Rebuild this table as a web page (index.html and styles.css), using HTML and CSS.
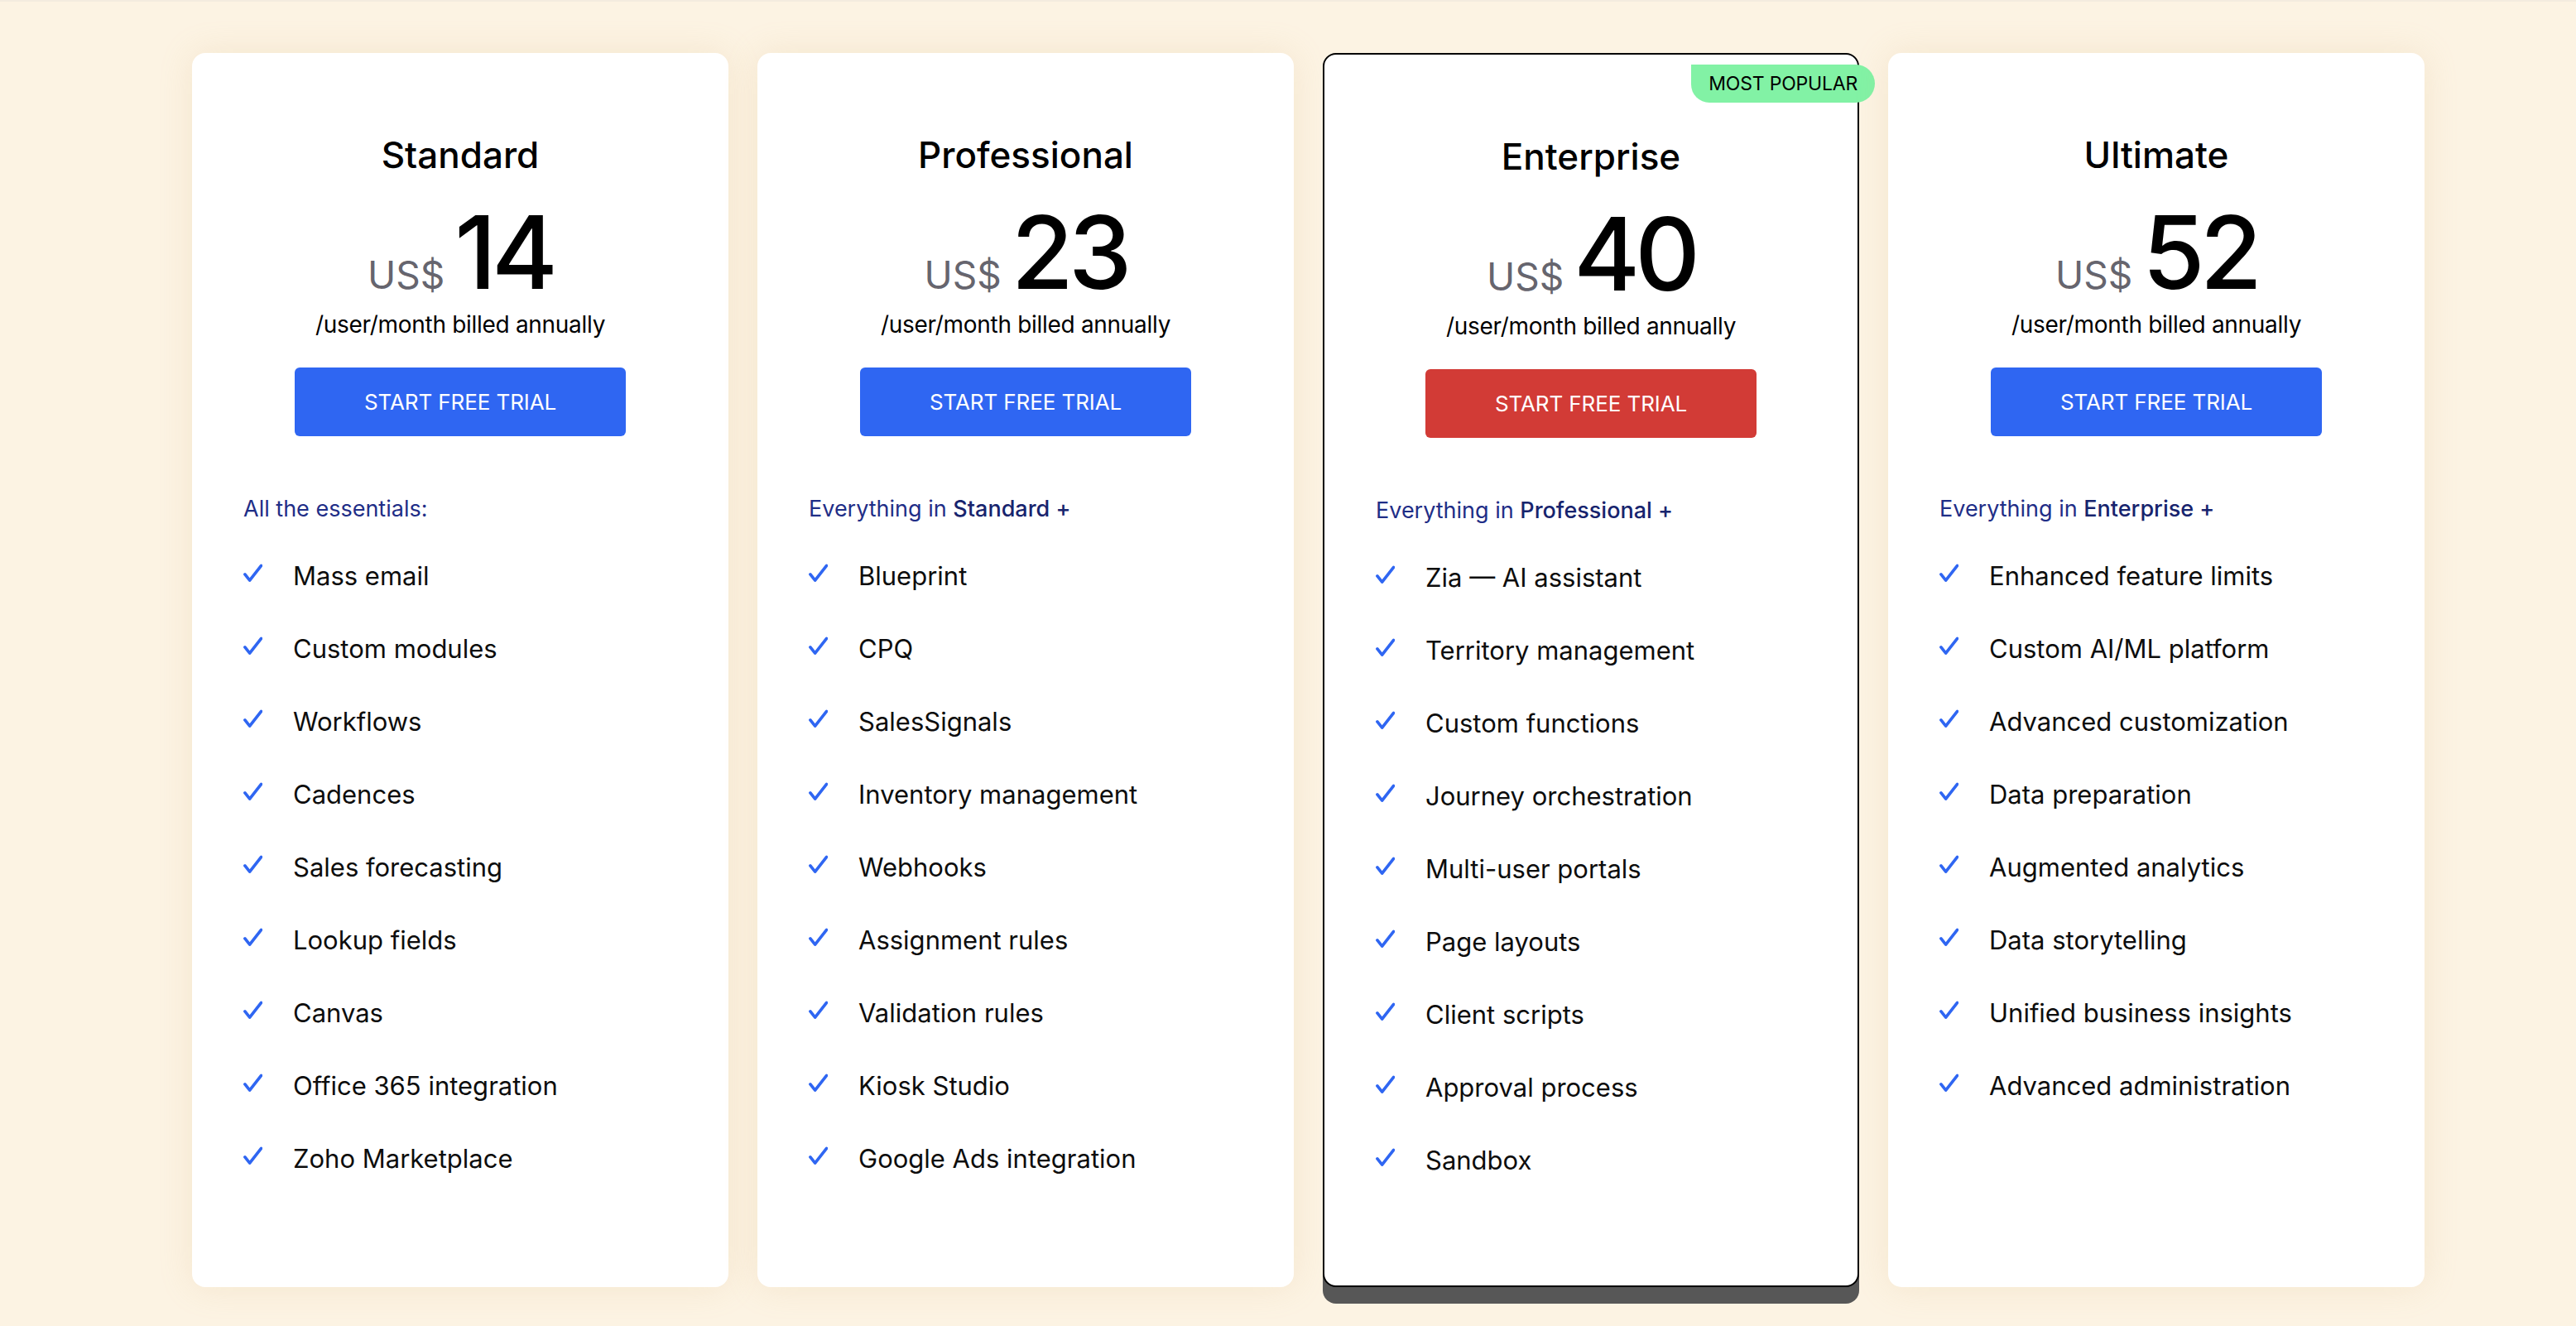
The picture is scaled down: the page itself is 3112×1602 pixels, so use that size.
FILE: index.html
```html
<!DOCTYPE html>
<html lang="en">
<head>
<meta charset="utf-8">
<title>Pricing</title>
<link rel="stylesheet" href="styles.css">
</head>
<body>
<main class="plans">
  <section class="card">
    <h2 class="plan-name">Standard</h2>
    <div class="price"><span class="currency">US$</span><span class="amount">14</span></div>
    <p class="billing">/user/month billed annually</p>
    <a class="cta" href="#">START FREE TRIAL</a>
    <p class="features-head">All the essentials:</p>
    <ul class="features">
      <li><svg class="check" viewBox="0 0 24 24"><path d="M2 13.5 L8 21 L22.5 2.5"/></svg><span>Mass email</span></li>
      <li><svg class="check" viewBox="0 0 24 24"><path d="M2 13.5 L8 21 L22.5 2.5"/></svg><span>Custom modules</span></li>
      <li><svg class="check" viewBox="0 0 24 24"><path d="M2 13.5 L8 21 L22.5 2.5"/></svg><span>Workflows</span></li>
      <li><svg class="check" viewBox="0 0 24 24"><path d="M2 13.5 L8 21 L22.5 2.5"/></svg><span>Cadences</span></li>
      <li><svg class="check" viewBox="0 0 24 24"><path d="M2 13.5 L8 21 L22.5 2.5"/></svg><span>Sales forecasting</span></li>
      <li><svg class="check" viewBox="0 0 24 24"><path d="M2 13.5 L8 21 L22.5 2.5"/></svg><span>Lookup fields</span></li>
      <li><svg class="check" viewBox="0 0 24 24"><path d="M2 13.5 L8 21 L22.5 2.5"/></svg><span>Canvas</span></li>
      <li><svg class="check" viewBox="0 0 24 24"><path d="M2 13.5 L8 21 L22.5 2.5"/></svg><span>Office 365 integration</span></li>
      <li><svg class="check" viewBox="0 0 24 24"><path d="M2 13.5 L8 21 L22.5 2.5"/></svg><span>Zoho Marketplace</span></li>
    </ul>
  </section>

  <section class="card">
    <h2 class="plan-name">Professional</h2>
    <div class="price"><span class="currency">US$</span><span class="amount">23</span></div>
    <p class="billing">/user/month billed annually</p>
    <a class="cta" href="#">START FREE TRIAL</a>
    <p class="features-head">Everything in <strong>Standard +</strong></p>
    <ul class="features">
      <li><svg class="check" viewBox="0 0 24 24"><path d="M2 13.5 L8 21 L22.5 2.5"/></svg><span>Blueprint</span></li>
      <li><svg class="check" viewBox="0 0 24 24"><path d="M2 13.5 L8 21 L22.5 2.5"/></svg><span>CPQ</span></li>
      <li><svg class="check" viewBox="0 0 24 24"><path d="M2 13.5 L8 21 L22.5 2.5"/></svg><span>SalesSignals</span></li>
      <li><svg class="check" viewBox="0 0 24 24"><path d="M2 13.5 L8 21 L22.5 2.5"/></svg><span>Inventory management</span></li>
      <li><svg class="check" viewBox="0 0 24 24"><path d="M2 13.5 L8 21 L22.5 2.5"/></svg><span>Webhooks</span></li>
      <li><svg class="check" viewBox="0 0 24 24"><path d="M2 13.5 L8 21 L22.5 2.5"/></svg><span>Assignment rules</span></li>
      <li><svg class="check" viewBox="0 0 24 24"><path d="M2 13.5 L8 21 L22.5 2.5"/></svg><span>Validation rules</span></li>
      <li><svg class="check" viewBox="0 0 24 24"><path d="M2 13.5 L8 21 L22.5 2.5"/></svg><span>Kiosk Studio</span></li>
      <li><svg class="check" viewBox="0 0 24 24"><path d="M2 13.5 L8 21 L22.5 2.5"/></svg><span>Google Ads integration</span></li>
    </ul>
  </section>

  <section class="card card-featured">
    <span class="badge">MOST POPULAR</span>
    <h2 class="plan-name">Enterprise</h2>
    <div class="price"><span class="currency">US$</span><span class="amount">40</span></div>
    <p class="billing">/user/month billed annually</p>
    <a class="cta cta-red" href="#">START FREE TRIAL</a>
    <p class="features-head">Everything in <strong>Professional +</strong></p>
    <ul class="features">
      <li><svg class="check" viewBox="0 0 24 24"><path d="M2 13.5 L8 21 L22.5 2.5"/></svg><span>Zia — AI assistant</span></li>
      <li><svg class="check" viewBox="0 0 24 24"><path d="M2 13.5 L8 21 L22.5 2.5"/></svg><span>Territory management</span></li>
      <li><svg class="check" viewBox="0 0 24 24"><path d="M2 13.5 L8 21 L22.5 2.5"/></svg><span>Custom functions</span></li>
      <li><svg class="check" viewBox="0 0 24 24"><path d="M2 13.5 L8 21 L22.5 2.5"/></svg><span>Journey orchestration</span></li>
      <li><svg class="check" viewBox="0 0 24 24"><path d="M2 13.5 L8 21 L22.5 2.5"/></svg><span>Multi-user portals</span></li>
      <li><svg class="check" viewBox="0 0 24 24"><path d="M2 13.5 L8 21 L22.5 2.5"/></svg><span>Page layouts</span></li>
      <li><svg class="check" viewBox="0 0 24 24"><path d="M2 13.5 L8 21 L22.5 2.5"/></svg><span>Client scripts</span></li>
      <li><svg class="check" viewBox="0 0 24 24"><path d="M2 13.5 L8 21 L22.5 2.5"/></svg><span>Approval process</span></li>
      <li><svg class="check" viewBox="0 0 24 24"><path d="M2 13.5 L8 21 L22.5 2.5"/></svg><span>Sandbox</span></li>
    </ul>
  </section>

  <section class="card">
    <h2 class="plan-name">Ultimate</h2>
    <div class="price"><span class="currency">US$</span><span class="amount">52</span></div>
    <p class="billing">/user/month billed annually</p>
    <a class="cta" href="#">START FREE TRIAL</a>
    <p class="features-head">Everything in <strong>Enterprise +</strong></p>
    <ul class="features">
      <li><svg class="check" viewBox="0 0 24 24"><path d="M2 13.5 L8 21 L22.5 2.5"/></svg><span>Enhanced feature limits</span></li>
      <li><svg class="check" viewBox="0 0 24 24"><path d="M2 13.5 L8 21 L22.5 2.5"/></svg><span>Custom AI/ML platform</span></li>
      <li><svg class="check" viewBox="0 0 24 24"><path d="M2 13.5 L8 21 L22.5 2.5"/></svg><span>Advanced customization</span></li>
      <li><svg class="check" viewBox="0 0 24 24"><path d="M2 13.5 L8 21 L22.5 2.5"/></svg><span>Data preparation</span></li>
      <li><svg class="check" viewBox="0 0 24 24"><path d="M2 13.5 L8 21 L22.5 2.5"/></svg><span>Augmented analytics</span></li>
      <li><svg class="check" viewBox="0 0 24 24"><path d="M2 13.5 L8 21 L22.5 2.5"/></svg><span>Data storytelling</span></li>
      <li><svg class="check" viewBox="0 0 24 24"><path d="M2 13.5 L8 21 L22.5 2.5"/></svg><span>Unified business insights</span></li>
      <li><svg class="check" viewBox="0 0 24 24"><path d="M2 13.5 L8 21 L22.5 2.5"/></svg><span>Advanced administration</span></li>
    </ul>
  </section>
</main>
</body>
</html>
```

FILE: styles.css
```css
* { box-sizing: border-box; }

html, body {
  margin: 0;
  padding: 0;
}

body {
  background: #fcf3e3;
  border-top: 2px solid #f3ebdf;
  font-family: Inter, "Noto Sans", sans-serif;
  color: #000;
  height: 1602px;
  overflow: hidden;
}

.plans {
  display: grid;
  grid-template-columns: repeat(4, 648px);
  column-gap: 35px;
  padding: 62px 0 0 232px;
  align-items: stretch;
}

.card {
  position: relative;
  background: #fff;
  border-radius: 16px;
  padding: 95px 62px 135px;
  box-shadow: 0 0 40px rgba(214, 178, 118, 0.20);
  display: flex;
  flex-direction: column;
}

.card-featured {
  border: 2px solid #000;
  padding-bottom: 131px;
  box-shadow: 0 20px 0 0 #575757;
}

.badge {
  position: absolute;
  top: 12px;
  right: -21px;
  height: 46px;
  padding: 0 21px;
  background: #82f2a5;
  border-radius: 0 23px 23px 22px;
  font-size: 23px;
  line-height: 46px;
  color: #000;
  letter-spacing: -0.2px;
}

.plan-name {
  margin: 0;
  text-align: center;
  font-size: 44px;
  line-height: 56px;
  font-weight: 500;
}

.price {
  margin-top: 29px;
  height: 122px;
  display: flex;
  justify-content: center;
  align-items: baseline;
}

.currency {
  font-size: 46px;
  line-height: 46px;
  color: #66656e;
  margin-right: 12px;
}

.amount {
  font-size: 122px;
  line-height: 122px;
  font-weight: 500;
  letter-spacing: -6px;
}

.billing {
  margin: 8px 0 0;
  text-align: center;
  font-size: 28px;
  line-height: 36px;
  letter-spacing: -0.3px;
}

.cta {
  align-self: center;
  margin-top: 34px;
  width: 400px;
  height: 83px;
  border-radius: 6px;
  background: #2f66f2;
  color: #fff;
  text-decoration: none;
  font-size: 26px;
  line-height: 83px;
  text-align: center;
  letter-spacing: -0.1px;
}

.cta-red {
  background: #d23b36;
}

.features-head {
  margin: 70px 0 0;
  font-size: 27px;
  line-height: 36px;
  color: #1f2e87;
}

.features-head strong {
  font-weight: 500;
  color: #17246e;
}

.features {
  list-style: none;
  margin: 43px 0 0;
  padding: 0;
  display: flex;
  flex-direction: column;
  gap: 48px;
}

.features li {
  display: flex;
  align-items: center;
  font-size: 31px;
  line-height: 40px;
  color: #0d0d0d;
}

.check {
  width: 23px;
  height: 23px;
  flex: none;
  margin: 0 37px 8px 0;
  fill: none;
  stroke: #2f66f2;
  stroke-width: 3.8;
  stroke-linecap: round;
  stroke-linejoin: round;
}
```
